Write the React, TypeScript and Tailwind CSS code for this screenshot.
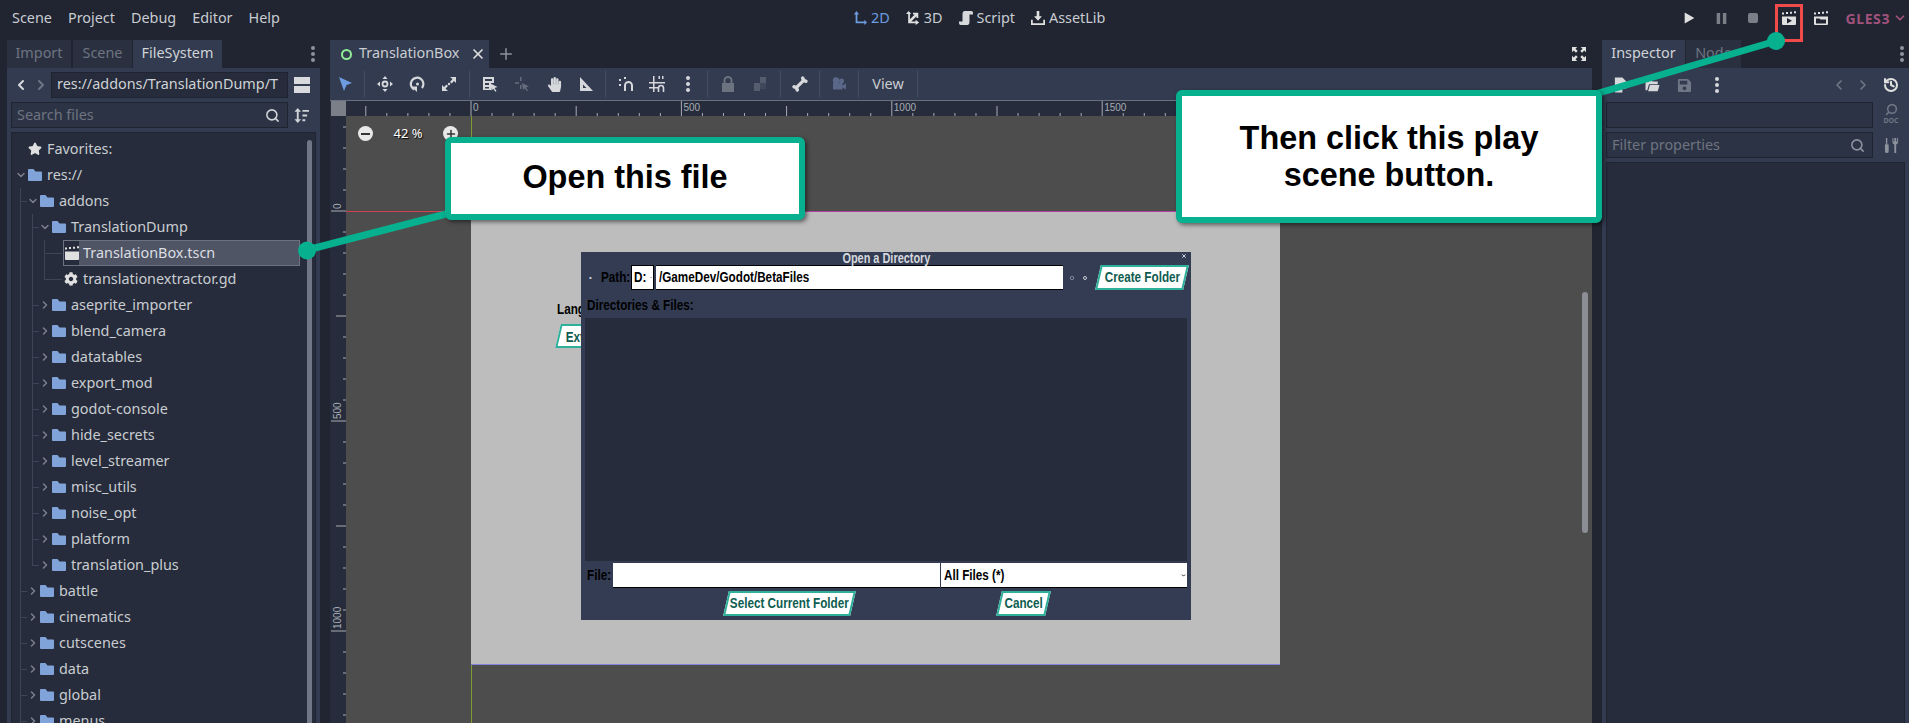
import React from 'react';
import { ChevronDown, ChevronLeft, ChevronRight, History, Plus, Search, Star, X } from 'lucide-react';
import { FaBone, FaCog, FaHandPaper, FaSave } from 'react-icons/fa';

interface TreeRow {
  name: string;
  depth: number;
  open?: boolean;
  kind?: 'folder' | 'scene' | 'script' | 'star';
  guides?: number[];
  lastGuide?: number;
}

const rows: TreeRow[] = [
  { name: 'Favorites:', depth: 0, kind: 'star' },
  { name: 'res://', depth: 0, open: true },
  { name: 'addons', depth: 1, open: true, guides: [0] },
  { name: 'TranslationDump', depth: 2, open: true, guides: [0, 1] },
  { name: 'TranslationBox.tscn', depth: 3, kind: 'scene', guides: [0, 1, 2] },
  { name: 'translationextractor.gd', depth: 3, kind: 'script', guides: [0, 1, 2], lastGuide: 2 },
  { name: 'aseprite_importer', depth: 2, guides: [0, 1] },
  { name: 'blend_camera', depth: 2, guides: [0, 1] },
  { name: 'datatables', depth: 2, guides: [0, 1] },
  { name: 'export_mod', depth: 2, guides: [0, 1] },
  { name: 'godot-console', depth: 2, guides: [0, 1] },
  { name: 'hide_secrets', depth: 2, guides: [0, 1] },
  { name: 'level_streamer', depth: 2, guides: [0, 1] },
  { name: 'misc_utils', depth: 2, guides: [0, 1] },
  { name: 'noise_opt', depth: 2, guides: [0, 1] },
  { name: 'platform', depth: 2, guides: [0, 1] },
  { name: 'translation_plus', depth: 2, guides: [0, 1], lastGuide: 1 },
  { name: 'battle', depth: 1, guides: [0] },
  { name: 'cinematics', depth: 1, guides: [0] },
  { name: 'cutscenes', depth: 1, guides: [0] },
  { name: 'data', depth: 1, guides: [0] },
  { name: 'global', depth: 1, guides: [0] },
  { name: 'menus', depth: 1, guides: [0] },
];

const indent = ['pl-[3px]', 'pl-[15px]', 'pl-[27px]', 'pl-[39px]'];
const guideLeft = ['left-[8px]', 'left-[20px]', 'left-[32px]'];
const stubWidth = ['w-[7px]', 'w-[7px]', 'w-[18px]'];

const Ico = ({ children, className = 'w-4 h-4' }: { children: React.ReactNode; className?: string }) => (
  <svg viewBox="0 0 16 16" fill="currentColor" className={className}>
    {children}
  </svg>
);

const FolderIcon = () => (
  <svg viewBox="0 0 14 12" className="w-[14px] h-[12px] shrink-0" fill="#80a3d9">
    <path d="M1 0h4.500l2 2.500H13a1 1 0 0 1 1 1V11a1 1 0 0 1-1 1H1a1 1 0 0 1-1-1V1a1 1 0 0 1 1-1z" />
  </svg>
);

const ClapperIcon = ({ mode }: { mode: 'plain' | 'play' | 'folder' }) => (
  <svg viewBox="0 0 16 14" className="w-[16px] h-[14px] shrink-0">
    <path d="M1 1.500h2v2H1zM5 1h2v2H5zM9 .7h2v2H9zM13 .3h2v2h-2z" fill="#e0e0e0" />
    <path d="M1 5.500h14V13a1 1 0 0 1-1 1H2a1 1 0 0 1-1-1z" fill="#e0e0e0" />
    {mode === 'play' && <path d="M6 7l5 2.700L6 12.400z" fill="#202531" />}
    {mode === 'folder' && <path d="M3 7.500h3.500l1 1H13V12.500H3z" fill="#202531" />}
  </svg>
);

const Dots = ({ className = 'text-[#8d929c]' }: { className?: string }) => (
  <svg viewBox="0 0 4 16" className={`w-[4px] h-[16px] ${className}`} fill="currentColor">
    <circle cx="2" cy="2" r="2" />
    <circle cx="2" cy="8" r="2" />
    <circle cx="2" cy="14" r="2" />
  </svg>
);

const ToolSep = () => <div className="w-px h-[26px] bg-[#454d62] mx-[4px] shrink-0" />;

const Tool = ({ children, w = 'w-[32px]', color = 'text-[#d6d8dc]' }: { children: React.ReactNode; w?: string; color?: string }) => (
  <div className={`${w} ${color} h-full shrink-0 flex items-center justify-center`}>{children}</div>
);

// game font in the running scene is a tall condensed face, squeezed Liberation stands in for it
const Narrow = ({ children, center }: { children: React.ReactNode; center?: boolean }) => (
  <span className={`inline-block whitespace-nowrap scale-x-[0.78] ${center ? 'origin-center' : 'origin-left'}`}>{children}</span>
);

const Ruler = () => {
  const ticks = [];
  for (let k = -6; k <= 53; k++) {
    const x = 125 + k * 21.04;
    const h = k % 10 === 0 ? 15 : k % 5 === 0 ? 10 : 3;
    ticks.push(<line key={k} x1={x} x2={x} y1={15 - h} y2={15} stroke="#a8acb4" strokeWidth="1" />);
  }
  return (
    <svg width="1246" height="15" className="block shrink-0">
      {ticks}
      {['0', '500', '1000', '1500'].map((label, i) => (
        <text key={label} x={127 + i * 210.4} y="10" fontSize="10" fill="#a8acb4" fontFamily="Liberation Sans">
          {label}
        </text>
      ))}
    </svg>
  );
};

const SideRuler = () => {
  const ticks = [];
  for (let k = -4; k <= 29; k++) {
    const y = 95 + k * 21;
    const w = k % 10 === 0 ? 15 : k % 5 === 0 ? 10 : 3;
    ticks.push(<line key={k} y1={y} y2={y} x1={15 - w} x2={15} stroke="#a8acb4" strokeWidth="1" />);
  }
  return (
    <svg width="15" height="607" className="block">
      {ticks}
      {['0', '500', '1000'].map((label, i) => (
        <text
          key={label}
          transform={`translate(10 ${93 + i * 210}) rotate(-90)`}
          fontSize="10"
          fill="#a8acb4"
          fontFamily="Liberation Sans"
        >
          {label}
        </text>
      ))}
    </svg>
  );
};

const SkewButton = ({ label, className }: { label: string; className: string }) => (
  <div className={`${className} h-[25px] bg-white border-2 border-[#2fb09a] -skew-x-[13deg] flex items-center justify-center`}>
    <span className="skew-x-[13deg] text-[#0f5c50] text-[15px] font-bold flex justify-center">
      <Narrow center>{label}</Narrow>
    </span>
  </div>
);

const GameDialog = () => (
  <div className="absolute left-[110px] top-[40px] w-[610px] h-[368px] bg-[#333c53] flex flex-col px-[4px] font-['Liberation_Sans',sans-serif] font-bold text-black">
    <div className="h-[13px] relative flex items-center justify-center text-[#d5d8dd] text-[14px]">
      <Narrow center>Open a Directory</Narrow>
      <X className="absolute right-0 top-[1px] w-[6px] h-[6px] text-white" strokeWidth={3} />
    </div>
    <div className="h-[25px] flex items-center text-[15px]">
      <span className="w-[16px] text-[#c8ccd4] text-[8px] pl-[4px]">•</span>
      <div className="w-[30px] shrink-0">
        <Narrow>Path:</Narrow>
      </div>
      <div className="w-[23px] h-[25px] bg-white border border-black flex items-center pl-[2px] justify-between pr-[1px] shrink-0">
        <Narrow>D:</Narrow>
        <ChevronDown className="w-[5px] h-[5px]" strokeWidth={4} />
      </div>
      <div className="w-[407px] h-[25px] ml-[2px] bg-white border-y border-black flex items-center pl-[3px] shrink-0">
        <Narrow>/GameDev/Godot/BetaFiles</Narrow>
      </div>
      <span className="w-[8px] h-[8px] ml-[5px] border border-[#c8ccd4] rounded-full scale-50" />
      <span className="w-[8px] h-[8px] ml-[5px] border-2 border-[#c8ccd4] rounded-full scale-50" />
      <SkewButton label="Create Folder" className="w-[88px] ml-[9px]" />
    </div>
    <div className="h-[28px] flex items-center pl-[2px] text-[15px] pt-[2px]">
      <Narrow>Directories &amp; Files:</Narrow>
    </div>
    <div className="h-[243px] bg-[#262c3b]" />
    <div className="h-[25px] mt-[2px] flex items-center text-[15px]">
      <div className="w-[28px] pl-[2px] shrink-0">
        <Narrow>File:</Narrow>
      </div>
      <div className="w-[327px] h-[25px] bg-white border-b border-black shrink-0" />
      <div className="w-[246px] h-[25px] ml-[1px] bg-white border-b border-black flex items-center justify-between pl-[3px] pr-[1px]">
        <Narrow>All Files (*)</Narrow>
        <ChevronDown className="w-[5px] h-[5px]" strokeWidth={4} />
      </div>
    </div>
    <div className="flex mt-[3px]">
      <SkewButton label="Select Current Folder" className="w-[127px] ml-[141px]" />
      <SkewButton label="Cancel" className="w-[49px] ml-[146px]" />
    </div>
  </div>
);

const App: React.FC = () => {
  return (
    <div className="relative w-[1909px] h-[723px] overflow-hidden bg-[#202531] font-['Noto_Sans',sans-serif] text-[14.4px] text-[#c9ccd1]">
      {/* top bar */}
      <div className="h-[40px] pb-[4px] flex items-center">
        <div className="w-[853px] pl-[12px] flex gap-[16px] shrink-0">
          {['Scene', 'Project', 'Debug', 'Editor', 'Help'].map((m) => (
            <span key={m}>{m}</span>
          ))}
        </div>
        <div className="flex gap-[16px]">
          <div className="flex items-center gap-[4px] text-[#6d9de0]">
            <Ico className="w-[14px] h-[14px]">
              <path d="M4 0l3 4H5v8h8v-2l3 3-3 3v-2H3V4H1z" />
            </Ico>
            <span>2D</span>
          </div>
          <div className="flex items-center gap-[4px]">
            <Ico className="w-[14px] h-[14px] text-[#e0e0e0]">
              <path d="M3 0l3 3.500H4.500v6L10 4H8V2h6v6h-2V6l-6 6h5v-2l4 3-4 3v-2H2.500V3.500H0z" />
            </Ico>
            <span>3D</span>
          </div>
          <div className="flex items-center gap-[4px]">
            <Ico className="w-[14px] h-[14px] text-[#d6d8dc]">
              <path d="M6 0h8a2 2 0 0 1 2 2v2h-4v8a4 4 0 0 1-2 4H2a2 2 0 0 1-2-2v-2h4V3a3 3 0 0 1 2-3z" />
            </Ico>
            <span>Script</span>
          </div>
          <div className="flex items-center gap-[4px]">
            <Ico className="w-[14px] h-[14px] text-[#e0e0e0]">
              <path d="M6.500 0h3v6h3L8 11 3.500 6h3zM0 10h2v4h12v-4h2v6H0z" />
            </Ico>
            <span>AssetLib</span>
          </div>
        </div>
        <div className="ml-auto flex items-center mr-[2px]">
          <Ico className="w-[11px] h-[12px] text-[#e0e0e0] mr-[21px]">
            <path d="M1 0l14 8-14 8z" />
          </Ico>
          <Ico className="w-[11px] h-[11px] text-[#7a7f88] mr-[21px]">
            <path d="M1 0h5v16H1zM10 0h5v16h-5z" />
          </Ico>
          <div className="w-[10px] h-[10px] rounded-[2px] bg-[#7a7f88] mr-[17px]" />
          <div className="w-[28px] h-[38px] mt-[10px] border-[3px] border-[#f04a4a] flex items-start justify-center pt-[4px]">
            <ClapperIcon mode="play" />
          </div>
          <div className="ml-[10px] mr-[16px]">
            <ClapperIcon mode="folder" />
          </div>
          <span className="font-bold text-[#a0527c] text-[14px] tracking-[0.6px]">GLES3</span>
          <ChevronDown className="w-[14px] h-[14px] text-[#a0527c] ml-[3px]" strokeWidth={3} />
        </div>
      </div>

      <div className="h-[683px] flex">
        {/* left dock */}
        <div className="w-[313px] ml-[7px] shrink-0 flex flex-col">
          <div className="h-[28px] flex items-center">
            <div className="w-[64px] h-full pb-[2px] bg-[#2a3040] text-[#6e7480] flex items-center justify-center">Import</div>
            <div className="w-[59px] h-full pb-[2px] ml-[2px] bg-[#2a3040] text-[#6e7480] flex items-center justify-center">Scene</div>
            <div className="w-[89px] h-full pb-[2px] ml-[1px] bg-[#323b4f] text-[#d0d3d8] flex items-center justify-center">FileSystem</div>
            <div className="ml-auto mr-[5px]">
              <Dots />
            </div>
          </div>
          <div className="flex-1 min-h-0 bg-[#323b4f] px-[4px] pt-[4px] flex flex-col">
            <div className="h-[26px] flex items-center">
              <div className="w-[40px] flex items-center shrink-0 text-[#d6d8dc]">
                <ChevronLeft className="w-[16px] h-[18px] ml-[2px]" strokeWidth={3} />
                <ChevronRight className="w-[16px] h-[18px] ml-[4px] text-[#6f7686]" strokeWidth={3} />
              </div>
              <div className="w-[237px] h-[26px] pb-[2px] bg-[#262c3b] border border-[#1f2430] flex items-center pl-[5px] overflow-hidden whitespace-nowrap text-[#cfd2d6]">
                res://addons/TranslationDump/T
              </div>
              <div className="ml-[6px] w-[16px] h-[16px] flex flex-col justify-between">
                <div className="h-[7px] bg-[#d8dade]" />
                <div className="h-[7px] bg-[#d8dade]" />
              </div>
            </div>
            <div className="h-[26px] mt-[4px] flex items-center">
              <div className="w-[277px] h-[26px] bg-[#2c3345] border border-[#1f2430] flex items-center pl-[5px] text-[#6e7480]">
                <span className="pb-[1px]">Search files</span>
                <Search className="ml-auto mr-[7px] w-[15px] h-[15px] text-[#d0d3d8]" strokeWidth={2.5} />
              </div>
              <svg viewBox="0 0 16 16" className="ml-[6px] w-[15px] h-[15px] text-[#d0d3d8]" fill="currentColor">
                <path d="M4 0l3.500 4H5v8h2.500L4 16 .5 12H3V4H.5zM9 2h7v2H9zM9 7h5v2H9zM9 12h3v2H9z" />
              </svg>
            </div>
            <div className="flex-1 min-h-0 mt-[4px] w-[305px] bg-[#262c3b] border border-[#1f2430] border-b-0 relative overflow-hidden pt-[3px]">
              {rows.map((r) => (
                <div key={r.name} className={`relative h-[26px] flex items-center ${indent[r.depth]}`}>
                  {r.guides?.map((g) => (
                    <div
                      key={g}
                      className={`absolute top-0 w-px bg-[#3d4455] ${guideLeft[g]} ${r.lastGuide === g ? 'h-[13px]' : 'h-[26px]'}`}
                    />
                  ))}
                  {r.depth > 0 && (
                    <div className={`absolute top-[13px] h-px bg-[#3d4455] ${guideLeft[r.depth - 1]} ${stubWidth[r.depth - 1]}`} />
                  )}
                  <div className="w-[12px] shrink-0 mr-[1px] flex justify-center text-[#7b808b]">
                    {r.kind === undefined &&
                      (r.open ? (
                        <ChevronDown className="w-[12px] h-[12px]" strokeWidth={3} />
                      ) : (
                        <ChevronRight className="w-[12px] h-[12px]" strokeWidth={3} />
                      ))}
                  </div>
                  {r.kind === 'star' && <Star className="w-[14px] h-[14px] text-[#e0e0e0] shrink-0" fill="currentColor" />}
                  {r.kind === undefined && <FolderIcon />}
                  {r.kind === 'script' && <FaCog className="w-[14px] h-[14px] text-[#e0e0e0] shrink-0" />}
                  {r.kind === 'scene' ? (
                    <div className="flex h-[26px] items-center w-[237px] border border-[#6d7280] bg-[#4f5565] -ml-[1px] -mr-[1px]">
                      <div className="w-[15px] h-full bg-[#262c3b] shrink-0 flex items-center">
                        <ClapperIcon mode="plain" />
                      </div>
                      <span className="ml-[4px] pb-[1px] text-[#dcdee2]">{r.name}</span>
                    </div>
                  ) : (
                    <span className="ml-[5px] pb-[1px] whitespace-nowrap">{r.name}</span>
                  )}
                </div>
              ))}
              <div className="absolute right-[3px] top-[7px] bottom-0 w-[5px] rounded-t-[3px] bg-[#6f7686]" />
            </div>
          </div>
        </div>

        {/* center */}
        <div className="w-[1262px] ml-[10px] shrink-0 flex flex-col">
          <div className="h-[28px] flex items-center">
            <div className="w-[159px] h-full bg-[#323b4f] flex items-center pl-[11px] shrink-0">
              <div className="w-[11px] h-[11px] rounded-full border-2 border-[#8eef97] shrink-0" />
              <span className="ml-[7px] pb-[2px] text-[#c9ccd1]">TranslationBox</span>
              <X className="ml-auto mr-[3px] w-[16px] h-[16px] text-[#e0e0e0]" strokeWidth={2.500} />
            </div>
            <Plus className="ml-[8px] w-[18px] h-[18px] text-[#8d929c]" strokeWidth={2} />
            <Ico className="ml-auto mr-[6px] w-[14px] h-[14px] text-[#e0e0e0]">
              <path d="M0 0h6L4 2l2.500 2.500-2 2L2 4 0 6zM16 0v6l-2-2-2.500 2.500-2-2L12 2l-2-2zM0 16v-6l2 2 2.500-2.500 2 2L4 14l2 2zM16 16h-6l2-2-2.500-2.500 2-2L14 12l2-2z" />
            </Ico>
          </div>
          <div className="h-[33px] bg-[#323b4f] border-b border-[#6a7080] flex items-center shrink-0">
            <Tool color="text-[#6d9de0]" w="w-[30px]">
              <Ico><path d="M2 1l13 6-5.500 2L7 15z" /></Ico>
            </Tool>
            <ToolSep />
            <Tool>
              <Ico>
                <path d="M8 0l2.500 3h-5zM8 16l-2.500-3h5zM0 8l3-2.500v5zM16 8l-3 2.500v-5z" />
                <circle cx="8" cy="8" r="2.500" fill="none" stroke="currentColor" strokeWidth="1.800" />
              </Ico>
            </Tool>
            <Tool>
              <Ico>
                <path d="M5 13.500A6.300 6.300 0 1 1 13 12" fill="none" stroke="currentColor" strokeWidth="2.200" />
                <path d="M2 10.500h6v5.500z" />
                <circle cx="8.500" cy="8" r="1.500" />
              </Ico>
            </Tool>
            <Tool>
              <Ico>
                <path d="M9 1h6v6l-2-2-2.500 2.500-1.500-1.500L11.500 3zM7 15H1V9l2 2 2.500-2.500L7 10l-2.500 2.500z" />
                <circle cx="8" cy="8" r="1.200" />
              </Ico>
            </Tool>
            <ToolSep />
            <Tool>
              <Ico>
                <path fillRule="evenodd" d="M1 1h11v6H9v7H1zM3 3v2h7V3zM3 7v2h4V7zM3 11v1.500h4V11z" />
                <path d="M8.500 7.500L15.500 11l-3 1 2 3-1.200.8-2-3L9.500 14.500z" />
              </Ico>
            </Tool>
            <Tool color="text-[#666d7f]">
              <Ico>
                <path d="M6 1h1.500v4H6zM6 9h1.500v4H6zM1 6.300h4v1.500H1z" />
                <path d="M8 7l7 3.500-3 1 2 3-1.200.8-2-3L9 14z" />
              </Ico>
            </Tool>
            <Tool>
              <FaHandPaper className="w-[15px] h-[15px]" />
            </Tool>
            <Tool w="w-[31px]">
              <Ico>
                <path fillRule="evenodd" d="M2 1l13 14H2zM5 8.500V12h3.500z" />
              </Ico>
            </Tool>
            <ToolSep />
            <Tool w="w-[31px]">
              <Ico>
                <path d="M7 15V9.500a3.500 3.500 0 0 1 7 0V15" fill="none" stroke="currentColor" strokeWidth="2" />
                <path d="M1 3h2v2H1zM1 8h2v2H1zM6 1h2v2H6z" />
              </Ico>
            </Tool>
            <Tool w="w-[31px]">
              <Ico>
                <path d="M4 0h1.500v6H16v1.500H5.500V11H9v1.500H5.500V16H4v-3.500H0V11h4V7.500H0V6h4zM9.500 0H11v3H9.500zM13 0h1.500v3H13z" />
                <path d="M9.500 16v-4a2.500 2.500 0 0 1 5 0v4" fill="none" stroke="currentColor" strokeWidth="1.600" />
              </Ico>
            </Tool>
            <Tool w="w-[31px]">
              <Dots className="text-[#d6d8dc]" />
            </Tool>
            <ToolSep />
            <Tool color="text-[#6c7280]">
              <Ico>
                <path d="M8 0a4.500 4.500 0 0 1 4.500 4.500V7H14v9H2V7h1.500V4.500A4.500 4.500 0 0 1 8 0zm0 2a2.500 2.500 0 0 0-2.500 2.500V7h5V4.500A2.500 2.500 0 0 0 8 2z" />
              </Ico>
            </Tool>
            <Tool color="text-[#555c6e]">
              <Ico>
                <path d="M2 7h6v8H2zM8 1h6v6H8z" />
                <path d="M8 7h6v6H8z" opacity=".4" />
              </Ico>
            </Tool>
            <ToolSep />
            <Tool w="w-[30px]">
              <FaBone className="w-[16px] h-[16px] -rotate-45" />
            </Tool>
            <ToolSep />
            <Tool w="w-[30px]" color="text-[#5a6788]">
              <Ico>
                <circle cx="5" cy="4.500" r="3.200" />
                <circle cx="10.500" cy="5" r="2.500" />
                <path d="M2 7h9.500v6.500H2zM11.500 9.500L15 7.500v6l-3.500-2z" />
              </Ico>
            </Tool>
            <ToolSep />
            <div className="w-[50px] text-center shrink-0">View</div>
            <ToolSep />
          </div>
          <div className="h-[15px] flex bg-[#262c3b] shrink-0">
            <div className="w-[15px] ml-[1px] h-full bg-[#7b7f88] shrink-0" />
            <Ruler />
          </div>
          <div className="flex-1 min-h-0 flex">
            <div className="w-[16px] bg-[#262c3b] shrink-0 pl-[1px]">
              <SideRuler />
            </div>
            <div className="flex-1 relative bg-[#4d4d4d] overflow-hidden">
              <div className="absolute left-[125px] top-0 bottom-0 w-px bg-[#7f9a2e]" />
              <div className="absolute left-0 top-[95px] w-[125px] h-px bg-[#d1404f]" />
              <div className="absolute left-[12px] top-[10px] w-[100px] flex items-center justify-between">
                <div className="w-[15px] h-[15px] rounded-full bg-[#e8e8e8] flex items-center justify-center">
                  <div className="w-[9px] h-[2px] bg-[#333]" />
                </div>
                <span className="text-white text-[13px] leading-[15px] [text-shadow:1px_1px_1px_#000]">42 %</span>
                <div className="w-[15px] h-[15px] rounded-full bg-[#e8e8e8] flex items-center justify-center">
                  <Plus className="w-[12px] h-[12px] text-[#333]" strokeWidth={3} />
                </div>
              </div>
              <div className="absolute left-[125px] top-[95px] w-[809px] h-[454px] bg-[#bdbdbd] border-t border-t-[#b23fa0] border-b border-b-[#8585dd]">
                <span className="absolute left-[86px] top-[86px] text-black font-bold text-[15px] font-['Liberation_Sans',sans-serif]">
                  <Narrow>Lang</Narrow>
                </span>
                <div className="absolute left-[87px] top-[112px] w-[40px] h-[24px] bg-white border-2 border-[#2fb09a] -skew-x-[13deg] pl-[6px] text-[#0f5c50] font-bold text-[15px] font-['Liberation_Sans',sans-serif]">
                  <span className="inline-block skew-x-[13deg]">
                    <Narrow>Ext</Narrow>
                  </span>
                </div>
                <GameDialog />
              </div>
              <div className="absolute right-[4px] top-[176px] w-[6px] h-[241px] rounded-[3px] bg-[#8b8e94]" />
            </div>
          </div>
        </div>

        {/* right dock */}
        <div className="w-[307px] ml-[10px] shrink-0 flex flex-col">
          <div className="h-[28px] flex items-center">
            <div className="w-[83px] h-full pb-[2px] bg-[#323b4f] text-[#d0d3d8] flex items-center justify-center">Inspector</div>
            <div className="w-[55px] h-full pb-[2px] ml-[1px] bg-[#2a3040] text-[#6e7480] flex items-center justify-center">Node</div>
            <div className="ml-auto mr-[5px]">
              <Dots />
            </div>
          </div>
          <div className="flex-1 min-h-0 bg-[#323b4f] px-[4px] flex flex-col">
            <div className="h-[34px] flex items-center">
              <Ico className="ml-[7px] w-[15px] h-[16px] text-[#d6d8dc]">
                <path d="M2 0h8l4 4v8h-4v4H2z" />
              </Ico>
              <Ico className="ml-[17px] w-[15px] h-[14px] text-[#d6d8dc]">
                <path d="M0 2h6l2 2h6v3H4L2 14H0zM5 8h11l-2 7H3z" />
              </Ico>
              <FaSave className="ml-[17px] w-[15px] h-[15px] text-[#6f7686]" />
              <div className="ml-[23px]">
                <Dots className="text-[#d6d8dc]" />
              </div>
              <ChevronLeft className="ml-[112px] w-[16px] h-[20px] text-[#6f7686]" strokeWidth={2.500} />
              <ChevronRight className="ml-[8px] w-[16px] h-[20px] text-[#6f7686]" strokeWidth={2.500} />
              <History className="ml-[12px] w-[16px] h-[16px] text-[#e0e0e0]" strokeWidth={3} />
            </div>
            <div className="h-[26px] flex items-center">
              <div className="w-[267px] h-[26px] bg-[#2c3345] border border-[#1f2430]" />
              <div className="ml-[10px] w-[16px] h-[24px] text-[#6f7686] flex flex-col items-center">
                <Search className="w-[13px] h-[13px] -scale-x-100" strokeWidth={3} />
                <span className="text-[7px] leading-[7px] font-bold mt-[1px]">DOC</span>
              </div>
            </div>
            <div className="h-[26px] mt-[4px] flex items-center">
              <div className="w-[267px] h-[26px] bg-[#2c3345] border border-[#1f2430] flex items-center pl-[5px] text-[#6e7480]">
                <span className="pb-[1px]">Filter properties</span>
                <Search className="ml-auto mr-[7px] w-[15px] h-[15px] text-[#8d929c]" strokeWidth={2.500} />
              </div>
              <Ico className="ml-[11px] w-[15px] h-[15px] text-[#8d929c]">
                <path d="M2 0h1.500v7H5v7a2 2 0 0 1-4 0V7h1zM10 0v3a1 1 0 0 0 1 1V0h2v4a1 1 0 0 0 1-1V0h1v4a3 3 0 0 1-2 3v9h-2V7a3 3 0 0 1-2-3V0z" />
              </Ico>
            </div>
            <div className="flex-1 mt-[4px] w-[299px] bg-[#262c3b] border border-[#1f2430] border-b-0" />
          </div>
        </div>
      </div>

      {/* tutorial annotations */}
      <svg className="absolute inset-0 pointer-events-none" width="1909" height="723">
        <line x1="307" y1="250" x2="450" y2="213" stroke="#07b08f" strokeWidth="7" />
        <circle cx="307" cy="250.500" r="9" fill="#07b08f" />
        <line x1="1776" y1="41" x2="1592" y2="95" stroke="#07b08f" strokeWidth="7" />
        <circle cx="1776" cy="41" r="9" fill="#07b08f" />
      </svg>
      <div className="absolute left-[445px] top-[137px] w-[360px] h-[83px] bg-white border-[6px] border-[#07b08f] rounded-[6px] shadow-[2px_2px_4px_rgba(0,0,0,0.5)] flex items-center justify-center pb-[2px] font-['Liberation_Sans',sans-serif] font-bold text-[32.4px] text-black">
        Open this file
      </div>
      <div className="absolute left-[1176px] top-[90px] w-[426px] h-[133px] bg-white border-[6px] border-[#07b08f] rounded-[6px] shadow-[2px_2px_4px_rgba(0,0,0,0.5)] flex items-center justify-center text-center font-['Liberation_Sans',sans-serif] font-bold text-[32.4px] leading-[37px] text-black">
        Then click this play
        <br />
        scene button.
      </div>
    </div>
  );
};

export default App;
